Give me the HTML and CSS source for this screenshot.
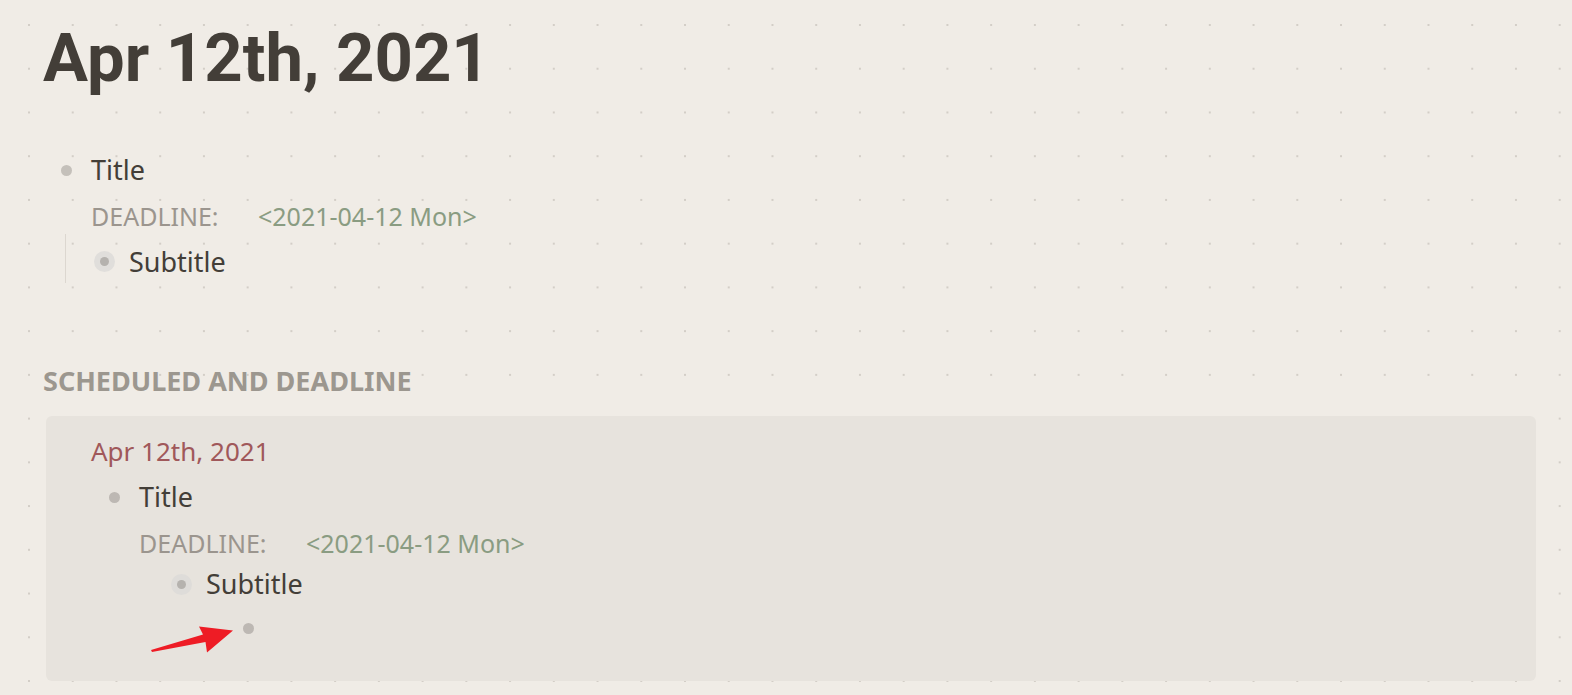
FILE: index.html
```html
<!DOCTYPE html>
<html>
<head>
<meta charset="utf-8">
<link rel="stylesheet" href="styles.css">
</head>
<body>
<div class="page">
  <h1 class="page-title">Apr 12th, 2021</h1>

  <div class="block">
    <div class="row">
      <span class="bullet-wrap"><span class="bullet"></span></span>
      <span class="text">Title</span>
    </div>
    <div class="deadline-row">
      <span class="label">DEADLINE:</span>
      <span class="date">&lt;2021-04-12 Mon&gt;</span>
    </div>
    <div class="children">
      <div class="row sub">
        <span class="bullet-wrap"><span class="bullet ring"><span class="dot"></span></span></span>
        <span class="text">Subtitle</span>
      </div>
    </div>
  </div>

  <h2 class="section-title">SCHEDULED AND DEADLINE</h2>

  <div class="card">
    <div class="card-date">Apr 12th, 2021</div>
    <div class="block">
      <div class="row">
        <span class="bullet-wrap"><span class="bullet"></span></span>
        <span class="text">Title</span>
      </div>
      <div class="deadline-row">
        <span class="label">DEADLINE:</span>
        <span class="date">&lt;2021-04-12 Mon&gt;</span>
      </div>
      <div class="card-children">
        <div class="row">
          <span class="bullet-wrap"><span class="bullet ring"><span class="dot"></span></span></span>
          <span class="text">Subtitle</span>
        </div>
        <div class="card-children">
          <div class="row empty-row">
            <span class="bullet-wrap"><span class="bullet"></span></span>
          </div>
        </div>
      </div>
    </div>
    <svg class="arrow" width="100" height="40" viewBox="140 615 100 40" xmlns="http://www.w3.org/2000/svg">
      <polygon points="151,649 203,633.5 199,625.5 233,629.5 207,651.5 205.5,641 152,651" fill="#ee1c25"/>
    </svg>
  </div>
</div>
</body>
</html>
```

FILE: styles.css
```css
html, body {
  margin: 0;
  padding: 0;
}
body {
  background-color: #f0ece6;
  background-image: radial-gradient(circle, #d3cec7 1px, rgba(211, 206, 199, 0) 1.4px);
  background-size: 43.74px 43.74px;
  background-position: 7.13px 3.13px;
  font-family: "Noto Sans", Roboto, sans-serif;
  color: #433e38;
  height: 695px;
  overflow: hidden;
}
.page {
  padding: 18px 0 0 43px;
}
.page-title {
  margin: 0;
  font-family: Roboto, "Noto Sans", sans-serif;
  font-size: 67px;
  line-height: 80px;
  font-weight: 700;
  color: #433e38;
}
.block {
  margin-top: 49px;
}
.row {
  display: flex;
  align-items: center;
  height: 46px;
}
.bullet-wrap {
  width: 24px;
  height: 24px;
  margin-left: 11px;
  margin-right: 13px;
  display: flex;
  align-items: center;
  justify-content: center;
  flex: none;
}
.bullet {
  width: 11px;
  height: 11px;
  border-radius: 50%;
  background: #c4c0ba;
}
.bullet.ring {
  width: 21px;
  height: 21px;
  background: #e0dedb;
  display: flex;
  align-items: center;
  justify-content: center;
}
.dot {
  width: 9px;
  height: 9px;
  border-radius: 50%;
  background: #b5b2ae;
}
.text {
  font-size: 27px;
  line-height: 36px;
  color: #433e38;
}
.deadline-row {
  display: flex;
  align-items: center;
  height: 41px;
  padding: 5px 0 0 48px;
  box-sizing: border-box;
  font-size: 25px;
  line-height: 34px;
}
.label {
  width: 167px;
  color: #9b958e;
  flex: none;
}
.date {
  color: #8a9c82;
}
.children {
  margin-left: 22px;
  padding: 6px 0 0 15px;
  border-left: 1px solid #dcd7d0;
}
.children .row {
  height: 43px;
}
.section-title {
  margin: 80px 0 0 0;
  font-size: 27px;
  line-height: 36px;
  font-weight: 700;
  color: #9c978f;
}
.card {
  position: relative;
  margin: 17px 36px 0 3px;
  padding: 12px 0 32px 45px;
  background: #e7e3dd;
  border-radius: 6px;
}
.card-date {
  height: 46px;
  line-height: 46px;
  font-size: 26px;
  color: #a0585a;
}
.card .block {
  margin-top: 0;
}
.card .bullet {
  background: #bdb8b3;
}
.card .bullet.ring {
  background: #dedcd9;
}
.card-children {
  margin-left: 67px;
}
.empty-row {
  height: 42px;
}
.arrow {
  position: absolute;
  left: 94px;
  top: 200px;
}
```
